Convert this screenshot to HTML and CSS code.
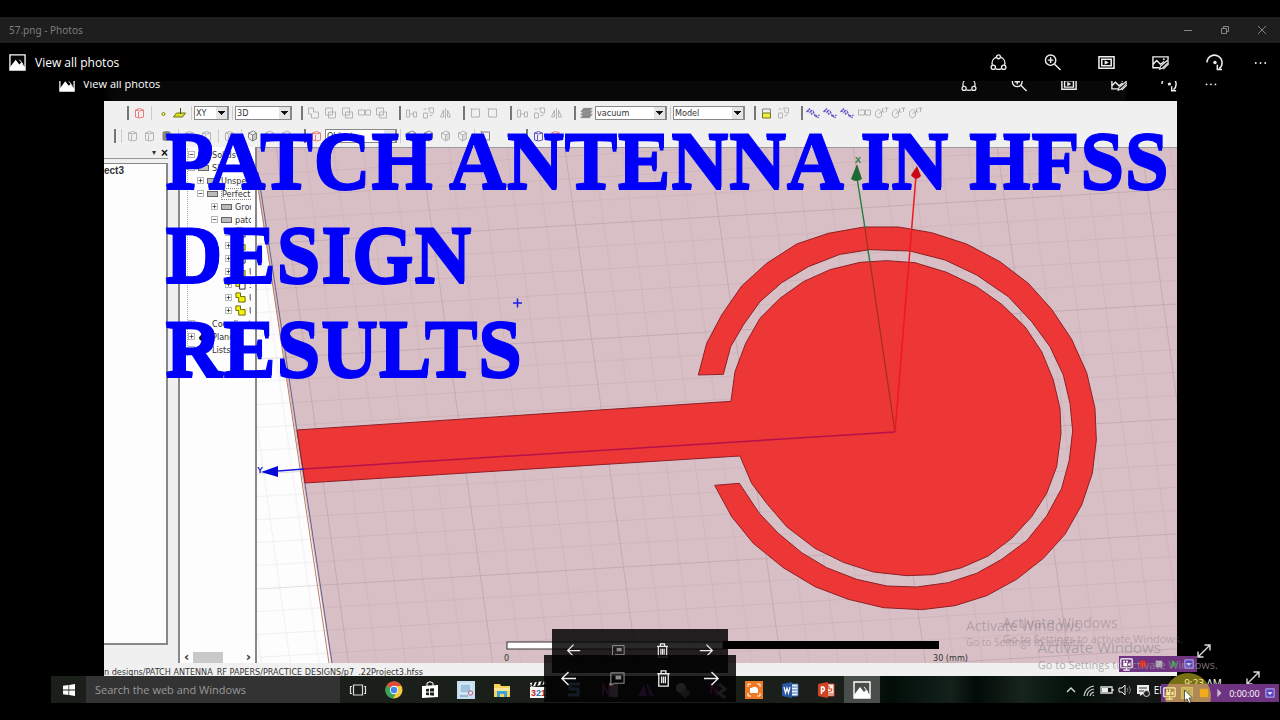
FILE: index.html
```html
<!DOCTYPE html>
<html lang="en">
<head>
<meta charset="utf-8">
<title>57.png - Photos</title>
<link rel="stylesheet" href="styles.css">
</head>
<body>
<svg class="defs" aria-hidden="true">
  <symbol id="picture" viewBox="0 0 18 18"><path d="M1 1h16v16H1z" fill="none" stroke="currentColor" stroke-width="1.4"/><path d="M1 14l6-8 4 5 2-2 4 5v3H1z" fill="currentColor"/><path d="M11 6l4 5" stroke="currentColor"/></symbol>
  <symbol id="share" viewBox="0 0 18 18"><g fill="none" stroke="currentColor" stroke-width="1.4"><path d="M6.600 3.200A7 7 0 0 0 2.500 11.500M11.400 3.200a7 7 0 0 1 4.100 8.300M6 15.700q3 1 6 0"/><circle cx="9" cy="3" r="2"/><circle cx="3.500" cy="14" r="2.300"/><circle cx="14.500" cy="14" r="2.300"/></g></symbol>
  <symbol id="magnify" viewBox="0 0 18 18"><g fill="none" stroke="currentColor" stroke-width="1.500"><circle cx="7" cy="6.500" r="5.500"/><path d="M11 10.500l6.500 6.500M4 6.500h6M7 3.500v6"/></g></symbol>
  <symbol id="slides" viewBox="0 0 18 18"><path d="M1 3h16v12H1zM4 5.500h10v7H4z" fill="none" stroke="currentColor" stroke-width="1.600"/><path d="M7 6.500v5L11.500 9z" fill="currentColor"/></symbol>
  <symbol id="edit" viewBox="0 0 18 18"><path d="M8 14.500H1V3h16v4M1 11l4-4 4 4 4-3" fill="none" stroke="currentColor" stroke-width="1.500"/><path d="M8 16l1-3 7-6 1.500 1.500L11 15zM12 16l6-6" fill="none" stroke="currentColor" stroke-width="1.200"/><circle cx="12.500" cy="5.500" r="1" fill="currentColor"/></symbol>
  <symbol id="rotate" viewBox="0 0 18 18"><path d="M1 9a8 8 0 1 1 13 6.500M12 11.500v5h5" fill="none" stroke="currentColor" stroke-width="1.600"/><circle cx="9.500" cy="9" r="1.800" fill="currentColor"/></symbol>
  <symbol id="more" viewBox="0 0 18 18"><g fill="currentColor"><circle cx="4" cy="9.500" r="1"/><circle cx="9" cy="9.500" r="1"/><circle cx="14" cy="9.500" r="1"/></g></symbol>
  <symbol id="back" viewBox="0 0 18 18"><path d="M17 9H2M9 2L2 9l7 7" fill="none" stroke="currentColor" stroke-width="1.500"/></symbol>
  <symbol id="next" viewBox="0 0 18 18"><path d="M1 9h15M9 2l7 7-7 7" fill="none" stroke="currentColor" stroke-width="1.500"/></symbol>
  <symbol id="album" viewBox="0 0 18 18"><path d="M3 3h14v11H6M3 3v12M1 15h5M3 12v5" fill="none" stroke="currentColor" stroke-width="1.200"/><path d="M8 6h6v4H8z" fill="currentColor"/></symbol>
  <symbol id="bin" viewBox="0 0 18 18"><path d="M2.500 4h13M6.500 3.500V1h5v2.500M4 4.500v12.500h10V4.500M7 7v7M9 7v7M11 7v7" fill="none" stroke="currentColor" stroke-width="1.400"/></symbol>
  <symbol id="expand" viewBox="0 0 16 16"><path d="M2 14L14 2M8.500 2H14v5.500M2 8.500V14h5.500" fill="none" stroke="currentColor" stroke-width="1.400"/></symbol>
  <symbol id="cyl" viewBox="0 0 12 12"><path d="M2 3q4-3 8 0v7q-4 2-8 0zM2 3q4 2 8 0M5 5v6" fill="none" stroke="currentColor"/></symbol>
  <symbol id="cylfull" viewBox="0 0 12 12"><path d="M2 2q4-2 8 0v8q-4 2-8 0z" fill="currentColor"/></symbol>
  <symbol id="cube" viewBox="0 0 12 12"><path d="M2 3l5-2 3 2v6l-4 2-4-3zM2 3l4 2 4-2M6 5v6" fill="none" stroke="currentColor"/><path d="M6 5l4-2v6l-4 2z" fill="currentColor" opacity=".4"/></symbol>
  <symbol id="unite" viewBox="0 0 12 12"><path d="M1 1h5v4h5v6H4V7H1z" fill="none" stroke="currentColor"/></symbol>
  <symbol id="subtract" viewBox="0 0 12 12"><path d="M1 1h7v7H1zM4 5h7v6H4z" fill="none" stroke="currentColor"/></symbol>
  <symbol id="split" viewBox="0 0 12 12"><path d="M0 3h6v5H0zM7 3h5v5H7z" fill="none" stroke="currentColor"/></symbol>
  <symbol id="move" viewBox="0 0 12 12"><path d="M1 3h3v7H1zM8 5h3v5H8zM4 7h4" fill="none" stroke="currentColor"/></symbol>
  <symbol id="turn" viewBox="0 0 12 12"><path d="M1 6h4v5H1zM6 1h5v5H8zM7 9l3-1M1 2h3" fill="none" stroke="currentColor"/></symbol>
  <symbol id="mirror" viewBox="0 0 12 12"><path d="M1 10l3-7v7zM6 1v11M8 3v7h3z" fill="none" stroke="currentColor"/></symbol>
  <symbol id="box" viewBox="0 0 12 12"><path d="M2 2h8v8H2zM1 1l2 2" fill="none" stroke="currentColor"/></symbol>
  <symbol id="stack" viewBox="0 0 12 12"><path d="M3 1h9l-3 4H0zM3 4h9l-3 4H0zM3 7h9l-3 4H0z" fill="currentColor" stroke="#aaa" stroke-width=".4"/></symbol>
  <symbol id="tile" viewBox="0 0 12 12"><path d="M2 6h8v5H2z" fill="#eeee4a" stroke="#6c7410"/><path d="M2 6V2h8v4" fill="none" stroke="#7d8a72"/></symbol>
  <symbol id="wave" viewBox="0 0 14 12"><path d="M0 5l3-3 2 5 2-2 2 5 4-2M1 3l2 3M9 8l3 3M4 4l3-1" fill="none" stroke="currentColor" stroke-width="1.400" stroke-dasharray="2 1"/></symbol>
  <symbol id="measure" viewBox="0 0 14 12"><path d="M1 5l3-3 3 3v4l-3 2-3-2zM4 7l5-4M8 1v4h2M12 1v4M10 1h4" fill="none" stroke="currentColor"/></symbol>
  <symbol id="part" viewBox="0 0 12 12"><path d="M1 1h5v4h5v6H4V6H1z" fill="#f4f400" stroke="#605f00"/></symbol>
  <symbol id="cut" viewBox="0 0 12 12"><path d="M1 1h7v7H1z" fill="#f4f400" stroke="#605f00"/><path d="M5 5h6v6H5z" fill="#fff" stroke="#222"/></symbol>
  <symbol id="cam" viewBox="0 0 16 16"><path d="M2 1h12a1 1 0 0 1 1 1v9a1 1 0 0 1-1 1H2a1 1 0 0 1-1-1V2a1 1 0 0 1 1-1zM4 15h8M8 12v3" fill="none" stroke="currentColor" stroke-width="1.500"/><path d="M4 6h5v4H4zM10 7l3-2v5l-3-1z" fill="currentColor"/><circle cx="5" cy="4.500" r="1.300" fill="currentColor"/><circle cx="8.500" cy="4.500" r="1.300" fill="currentColor"/></symbol>
  <symbol id="plus" viewBox="0 0 9 9"><path d="M.5.5h8v8h-8z" fill="#fff" stroke="#999"/><path d="M2 4.500h5M4.500 2v5" stroke="#333"/></symbol>
  <symbol id="minus" viewBox="0 0 9 9"><path d="M.5.5h8v8h-8z" fill="#fff" stroke="#999"/><path d="M2 4.500h5" stroke="#333"/></symbol>
</svg>

<div class="page">
  <header class="titlebar">
    <span>57.png - Photos</span>
    <div class="winbtns">
      <button aria-label="Minimise"><svg viewBox="0 0 10 10"><path d="M1 5.500h8"/></svg></button>
      <button aria-label="Restore"><svg viewBox="0 0 10 10"><path d="M1.500 3.500h5v5h-5zM3.500 3V1.500h5v5H7"/></svg></button>
      <button aria-label="Close"><svg viewBox="0 0 10 10"><path d="M1 1l8 8M9 1L1 9"/></svg></button>
    </div>
  </header>

  <nav class="photobar">
    <a href="#" class="allphotos"><svg><use href="#picture"/></svg>View all photos</a>
    <div class="tools">
      <button aria-label="Share"><svg><use href="#share"/></svg></button>
      <button aria-label="Zoom"><svg><use href="#magnify"/></svg></button>
      <button aria-label="Slideshow"><svg><use href="#slides"/></svg></button>
      <button aria-label="Edit"><svg><use href="#edit"/></svg></button>
      <button aria-label="Rotate"><svg><use href="#rotate"/></svg></button>
      <button class="last" aria-label="More"><svg><use href="#more"/></svg></button>
    </div>
  </nav>

  <nav class="photobar inner">
    <a href="#" class="allphotos"><svg><use href="#picture"/></svg>View all photos</a>
    <div class="tools">
      <button aria-label="Share"><svg><use href="#share"/></svg></button>
      <button aria-label="Zoom"><svg><use href="#magnify"/></svg></button>
      <button aria-label="Slideshow"><svg><use href="#slides"/></svg></button>
      <button aria-label="Edit"><svg><use href="#edit"/></svg></button>
      <button aria-label="Rotate"><svg><use href="#rotate"/></svg></button>
      <button class="last" aria-label="More"><svg><use href="#more"/></svg></button>
    </div>
  </nav>

  <main class="app">
    <div class="bar bar1">
      <i class="grip"></i><svg class="red"><use href="#cyl"/></svg><i class="sep"></i>
      <svg viewBox="0 0 12 12"><circle cx="7" cy="7" r="1.500" fill="#f6f66a" stroke="#7d8610"/></svg>
      <svg viewBox="0 0 12 12"><path d="M3 6h9l-3 4H0z" fill="#d7df2a" stroke="#6a7410"/><path d="M7 1v6" stroke="#49520a"/></svg><i class="sep"></i>
      <label class="sel s1"><select aria-label="Plane"><option>XY</option></select></label><i class="sep"></i>
      <label class="sel s2"><select aria-label="Mode"><option>3D</option></select></label>
      <i class="grip"></i><svg><use href="#unite"/></svg><svg><use href="#subtract"/></svg><svg><use href="#subtract"/></svg><svg><use href="#split"/></svg><svg><use href="#subtract"/></svg>
      <i class="grip"></i><svg><use href="#move"/></svg><svg><use href="#turn"/></svg><svg><use href="#mirror"/></svg>
      <i class="grip"></i><svg><use href="#box"/></svg><svg><use href="#box"/></svg>
      <i class="grip"></i><svg><use href="#move"/></svg><svg><use href="#turn"/></svg><svg><use href="#mirror"/></svg>
      <i class="grip"></i><svg class="dark"><use href="#stack"/></svg>
      <label class="sel s3"><select aria-label="Material"><option>vacuum</option></select></label><i class="sep"></i>
      <label class="sel s3"><select aria-label="Model type"><option>Model</option></select></label>
      <i class="grip"></i><svg><use href="#tile"/></svg><svg><use href="#turn"/></svg>
      <i class="grip"></i><svg class="blue"><use href="#wave"/></svg><svg class="blue"><use href="#wave"/></svg><svg class="blue"><use href="#wave"/></svg><svg><use href="#split"/></svg><svg><use href="#measure"/></svg><svg><use href="#measure"/></svg><svg><use href="#measure"/></svg>
    </div>
    <div class="bar bar2">
      <i class="grip"></i><i class="sep"></i><svg><use href="#cyl"/></svg><svg><use href="#cyl"/></svg><svg class="dark"><use href="#cylfull"/></svg><i class="sep"></i><svg><use href="#cyl"/></svg><svg><use href="#cyl"/></svg><i class="sep"></i><svg><use href="#cyl"/></svg><i class="sep"></i><svg class="dark"><use href="#cube"/></svg><svg><use href="#cube"/></svg><svg><use href="#cube"/></svg>
      <i class="grip"></i><svg class="red"><use href="#cyl"/></svg>
      <label class="sel s3"><select aria-label="Selection"><option>Object</option></select></label><i class="sep"></i>
      <svg class="dark"><use href="#cube"/></svg><svg class="dark"><use href="#cube"/></svg><svg><use href="#cube"/></svg><svg><use href="#cube"/></svg><i class="sep"></i><svg class="dark"><use href="#box"/></svg>
      <i class="grip wide"></i><svg class="blue"><use href="#cyl"/></svg><svg class="red"><use href="#cyl"/></svg>
    </div>

    <div class="work">
      <section class="project">
        <header><span>▾</span><button aria-label="Close panel">×</button></header>
        <div class="list"><b>ect3</b></div>
      </section>
      <section class="tree">
        <ul>
          <li><svg class="pm"><use href="#minus"/></svg><i class="chip"></i>Solids</li>
          <li><svg class="pm"><use href="#minus"/></svg><i class="chip"></i>Sheets</li>
          <li class="l1"><svg class="pm"><use href="#plus"/></svg><i class="chip"></i>Unspecified</li>
          <li class="l1"><svg class="pm"><use href="#minus"/></svg><i class="chip"></i><span class="focus">Perfect E</span></li>
          <li class="l2"><svg class="pm"><use href="#plus"/></svg><i class="chip"></i>Ground</li>
          <li class="l2"><svg class="pm"><use href="#minus"/></svg><i class="chip"></i>patch</li>
          <li class="l3"><svg class="pm"><use href="#plus"/></svg><svg><use href="#cut"/></svg></li>
          <li class="l3"><svg class="pm"><use href="#plus"/></svg><svg><use href="#part"/></svg></li>
          <li class="l3"><svg class="pm"><use href="#plus"/></svg><svg><use href="#cut"/></svg></li>
          <li class="l3"><svg class="pm"><use href="#plus"/></svg><svg><use href="#part"/></svg>U</li>
          <li class="l3"><svg class="pm"><use href="#plus"/></svg><svg><use href="#cut"/></svg>S</li>
          <li class="l3"><svg class="pm"><use href="#plus"/></svg><svg><use href="#part"/></svg>U</li>
          <li class="l3"><svg class="pm"><use href="#plus"/></svg><svg><use href="#part"/></svg>U</li>
          <li><svg class="pm"><use href="#plus"/></svg><i class="gap"></i>Coordinate</li>
          <li><svg class="pm"><use href="#plus"/></svg><svg viewBox="0 0 12 12"><path d="M1 7l5-6 5 2-3 8-6-1z" fill="#111"/></svg>Planes</li>
          <li><svg class="pm"><use href="#plus"/></svg><i class="gap"></i>Lists</li>
        </ul>
        <div class="hscroll"><span>‹</span><i></i><span>›</span></div>
      </section>
      <svg class="model" viewBox="257 148 920 515" preserveAspectRatio="xMinYMin slice" role="img" aria-label="Patch antenna model">
        <defs>
          <pattern id="grid" width="143" height="114" patternUnits="userSpaceOnUse" patternTransform="matrix(1 -.06 .14 1 718 216)">
            <path d="M28.600 0v114M57.200 0v114M85.800 0v114M114.400 0v114M0 22.800h143M0 45.600h143M0 68.400h143M0 91.200h143" stroke="#503040" stroke-opacity=".07" fill="none"/>
            <path d="M.5 0v114M0 .5h143" stroke="#503040" stroke-opacity=".15" fill="none"/>
          </pattern>
        </defs>
        <path d="M257 148h920v515H257z" fill="#fdfdfd"/>
        <path d="M257 148h920v515H331L257 185z" fill="#d8bfc5"/>
        <path d="M257 148h920v515H257z" fill="url(#grid)"/>
        <path d="M257 180L329 663" stroke="#bd7d62" fill="none"/>
        <path d="M258 172L332 663" stroke="#66618e" fill="none"/>
        <g transform="translate(680 200) scale(.33333)" fill="#ed3636" stroke="#8c2026" stroke-width="3">
          <path d="M55 525L80 430 125 345 185 258 260 190 350 132 445 100 552 81 655 81 755 98 860 132 960 185 1045 250 1115 328 1175 418 1220 518 1245 625 1249 720 1237 820 1205 915 1155 1003 1090 1075 1010 1138 920 1187 825 1217 725 1229 610 1223 505 1198 405 1160 310 1103 220 1030 155 950 104 856 178 850 238 940 295 1000 365 1058 440 1103 530 1138 620 1158 710 1161 805 1148 890 1120 965 1078 1040 1022 1100 948 1145 865 1168 780 1178 692 1170 610 1150 525 1110 440 1055 365 985 290 890 225 795 180 690 153 570 149 480 163 385 200 305 248 240 305 190 375 152 440 130 523z"/>
          <path d="M153 604L165 515 197 430 240 355 300 295 370 245 450 209 540 187 620 182 705 188 800 217 890 260 965 313 1035 380 1085 455 1120 540 1140 625 1143 700 1130 800 1100 880 1055 950 995 1015 925 1068 845 1103 760 1124 680 1127 580 1116 490 1087 405 1045 320 980 260 910 215 850 180 768-1125 849-1149 690z"/>
        </g>
        <path d="M857 178l8 50M868 250l2 12" stroke="#26803f" stroke-width="1.400"/>
        <path d="M865 228l3 22M870 262l25 170" stroke="#a0301c" stroke-width="1.200"/>
        <path d="M895 432l21-256" stroke="#f01820" stroke-width="1.500"/>
        <path d="M895 432L304 469" stroke="#b8104c" stroke-width="1.500"/>
        <path d="M304 469l-26 2" stroke="#1818d8" stroke-width="1.400"/>
        <path d="M261 472l17-6v11z" fill="#0808d8"/>
        <path d="M857 164l-6 15q5 4 11 0z" fill="#1d6b34"/>
        <path d="M917 166l-6 9q5 7 10 1z" fill="#c80814"/>
        <text x="855" y="163" class="axis green">X</text>
        <text x="257" y="473" class="axis blu">Y</text>
        <path d="M513 303h9M517.500 298.500v9" stroke="#1c1cf0" stroke-width="1.500"/>
        <rect x="507" y="642" width="216" height="7" fill="#fff" stroke="#333"/>
        <rect x="723" y="641" width="216" height="8" fill="#000"/>
        <text x="504" y="661" class="scale">0</text>
        <text x="933" y="661" class="scale">30 (mm)</text>
      </svg>
    </div>
    <footer class="status">n designs/PATCH ANTENNA_RF PAPERS/PRACTICE DESIGNS/p7_.22Project3.hfss</footer>
    <h1 class="headline">PATCH ANTENNA IN HFSS<br>DESIGN<br>RESULTS</h1>
  </main>

  <div class="taskbar">
    <button aria-label="Start" class="start"><svg viewBox="0 0 12 12"><path d="M0 1.700L5.500 1v4.600H0zM6.200.9L12 0v5.600H6.200zM0 6.400h5.500V11L0 10.300zM6.200 6.400H12V12l-5.800-.9z" fill="#fff"/></svg></button>
    <input type="text" aria-label="Search" placeholder="Search the web and Windows">
    <button aria-label="Task view"><svg viewBox="0 0 18 18"><path d="M4.500 4h9v10h-9zM3 5.500H1.500v7H3M15 5.500h1.500v7H15" fill="none" stroke="#ddd" stroke-width="1.200"/></svg></button>
    <button aria-label="Chrome"><svg viewBox="0 0 18 18"><circle cx="9" cy="9" r="8.500" fill="#f7cc3a"/><path d="M9 9L1.600 4.800A8.500 8.500 0 0 1 16.400 5H9z" fill="#dd4b3e"/><path d="M9 9L1.600 4.800A8.500 8.500 0 0 0 8 17.500L12 11z" fill="#37a35a"/><circle cx="9" cy="9" r="4.200" fill="#fff"/><circle cx="9" cy="9" r="3.300" fill="#4386ed"/></svg></button>
    <button aria-label="Store"><svg viewBox="0 0 18 18"><path d="M1 5l16-1v12L1 17z" fill="#fff"/><path d="M6 5V2q3-2.500 6 0v3" stroke="#fff" fill="none"/><path d="M5 8l3-.3v2.800H5zM9 7.600l4-.4v3.300H9zM5 11.500h3v2.700l-3-.2zM9 11.500h4v3.200l-4-.4z" fill="#182018"/></svg></button>
    <button aria-label="Snipping tool"><svg viewBox="0 0 18 18"><path d="M0 0h18v18H0z" fill="#c5dff0"/><path d="M3 3h11v9H3z" fill="#9cc3df" stroke="#e9f5fc"/><path d="M3 15h8" stroke="#688ca6"/><circle cx="13.500" cy="12" r="2.200" fill="none" stroke="#d0607a"/></svg></button>
    <button aria-label="File Explorer"><svg viewBox="0 0 18 18"><path d="M1 3h6l1 2h9v11H1z" fill="#f8d35c"/><path d="M1 7h16v3H1z" fill="#fae69a"/><path d="M4 16v-6h10v6h-3v-3H7v3z" fill="#3ba2dc"/></svg></button>
    <button aria-label="Video editor"><svg viewBox="0 0 18 18"><path d="M1 6h16v11H1z" fill="#f5f5f5"/><path d="M1 2l15-2 1 3-15 3z" fill="#fff"/><path d="M3 5l2-4M7 5l2-4M12 4l2-4" stroke="#111" stroke-width="2"/><text x="2" y="15" class="t321"><tspan fill="#c22">3</tspan><tspan fill="#27b">2</tspan><tspan fill="#c22">1</tspan></text></svg></button>
    <button aria-label="App S"><svg viewBox="0 0 18 18"><path d="M15 3H5v5h8v6H3" fill="none" stroke="#7aa6ea" stroke-width="3"/></svg></button>
    <button aria-label="OneNote"><svg viewBox="0 0 18 18"><path d="M9 2h8v14H9z" fill="#b79ab2"/><path d="M2 14V4l6 10V4" fill="none" stroke="#c83aa6" stroke-width="2"/></svg></button>
    <button aria-label="App M"><svg viewBox="0 0 18 18"><path d="M1 15l6-12 3 12zM9 3l4 12h4L11 3z" fill="#9a42c8"/></svg></button>
    <button aria-label="Contacts"><svg viewBox="0 0 18 18"><circle cx="8" cy="7" r="5" fill="#bbb"/><path d="M7 13l8-5 2 5-5 4z" fill="#888"/></svg></button>
    <button aria-label="App N"><svg viewBox="0 0 18 18"><path d="M2 13V3l6 10V3" fill="none" stroke="#b43296" stroke-width="2"/><path d="M10 3l6 5-6 4 6 5" fill="none" stroke="#aaa" stroke-width="3"/></svg></button>
    <button aria-label="Screen recorder"><svg viewBox="0 0 18 18"><path d="M0 0h18v18H0z" fill="#ec7a27"/><path d="M3 6V3h3M12 3h3v3M15 12v3h-3M6 15H3v-3" fill="none" stroke="#fff"/><path d="M5 7h2l1-1h3l2 2v4H5z" fill="#fff"/></svg></button>
    <button aria-label="Word"><svg viewBox="0 0 18 18"><path d="M8 3h9v12H8z" fill="#eef4fb" stroke="#3968b0"/><path d="M10 6h6M10 9h6M10 12h6" stroke="#3968b0"/><path d="M1 3l10-2v16L1 15z" fill="#2a57a4"/><path d="M3 6l1.500 6L6 7l1.500 5L9 6" fill="none" stroke="#fff" stroke-width="1.200"/></svg></button>
    <button aria-label="PowerPoint"><svg viewBox="0 0 18 18"><path d="M8 3h9v12H8z" fill="#fbeeea" stroke="#cf4525"/><path d="M12 5a3 3 0 1 0 3 3h-3zM11 13h5" stroke="#cf4525" fill="none"/><path d="M1 3l10-2v16L1 15z" fill="#d04423"/><path d="M4.500 13V6h2q2 2 0 4h-2" fill="none" stroke="#fff" stroke-width="1.500"/></svg></button>
    <button aria-label="Photos" class="active"><svg><use href="#picture"/></svg></button>
    <div class="tray">
      <svg viewBox="0 0 14 14"><path d="M3 9l4-4 4 4" fill="none" stroke="#ddd" stroke-width="1.300"/></svg>
      <svg viewBox="0 0 14 14"><path d="M2 13A11 11 0 0 1 12 3M5 13a8 8 0 0 1 7-7M8 13a5 5 0 0 1 4-4M11 13a3 3 0 0 1 1-1" fill="none" stroke="#ccc" stroke-width="1.200"/></svg>
      <svg viewBox="0 0 14 14"><path d="M1 4h11v6H1zM13 6v2" fill="none" stroke="#ddd" stroke-width="1.300"/><path d="M2 5h6v4H2z" fill="#eee"/></svg>
      <svg viewBox="0 0 14 14"><path d="M1 5h3l3-3v10L4 9H1z" fill="none" stroke="#eee"/><path d="M9 5q2 2 0 4M11 3q3 4 0 8" fill="none" stroke="#777"/></svg>
      <svg viewBox="0 0 14 14"><path d="M1 2h12v9H7l-3 2v-2H1z" fill="#eee"/><path d="M3 5h8M3 8h5" stroke="#333"/><circle cx="10.500" cy="10.500" r="3" fill="#222" stroke="#ddd"/></svg>
      <span>ENG</span>
      <time>9:23 AM</time>
    </div>
  </div>
</div>

<div class="mark m1"><b>Activate Windows</b><span>Go to Settings to activate</span></div>
<div class="mark m2"><b>Activate Windows</b><span>Go to Settings to activate Windows.</span></div>

<div class="viewnav v1">
  <button aria-label="Previous"><svg><use href="#back"/></svg></button>
  <button aria-label="Album" class="dim"><svg><use href="#album"/></svg></button>
  <button aria-label="Delete"><svg><use href="#bin"/></svg></button>
  <button aria-label="Next"><svg><use href="#next"/></svg></button>
</div>
<div class="viewnav v2">
  <button aria-label="Previous"><svg><use href="#back"/></svg></button>
  <button aria-label="Album" class="dim"><svg><use href="#album"/></svg></button>
  <button aria-label="Delete"><svg><use href="#bin"/></svg></button>
  <button aria-label="Next"><svg><use href="#next"/></svg></button>
</div>

<div class="rec r1">
  <svg><use href="#cam"/></svg>
  <svg viewBox="0 0 12 12"><circle cx="6" cy="6" r="4.500" fill="#e0281e"/></svg>
  <svg viewBox="0 0 12 12"><path d="M2 2h8v8H2z" fill="#b5aebb"/></svg>
  <svg viewBox="0 0 12 12"><path d="M3 1l7 5-7 5z" fill="#22a03a"/></svg>
  <svg viewBox="0 0 12 12"><path d="M1 1h10v10H1z" fill="#5b46c8" stroke="#c9c0f4"/><path d="M3 5h6L6 8z" fill="#fff"/></svg>
</div>
<div class="mark m3"><b>Activate Windows</b><span>Go to Settings to activate Windows.</span></div>
<button class="resize e1" aria-label="Resize inner"><svg><use href="#expand"/></svg></button>
<button class="resize e2" aria-label="Resize"><svg><use href="#expand"/></svg></button>
<div class="rec r2">
  <svg><use href="#cam"/></svg>
  <svg viewBox="0 0 12 12"><path d="M0 0h12v12H0z" fill="#a08a88" stroke="#d0bcae"/><path d="M4 3v6M8 3v6" stroke="#777" stroke-width="2"/></svg>
  <svg viewBox="0 0 12 12"><path d="M1 1h10v10H1z" fill="#f47a10"/></svg>
  <svg viewBox="0 0 12 12"><path d="M4 1l5 5-5 5z" fill="#c9b8cf"/></svg>
  <span>0:00:00</span>
  <svg viewBox="0 0 12 12"><path d="M1 1h10v10H1z" fill="#5b46c8" stroke="#c9c0f4"/><path d="M3 5h6L6 8z" fill="#fff"/></svg>
</div>
<div class="halo"><i></i></div>
<svg class="pointer" viewBox="0 0 10 15"><path d="M1 1v11l2.500-2.300L5.500 14l2-1-2-4H9z" fill="#fff" stroke="#222" stroke-width=".7"/></svg>
</body>
</html>
```
FILE: styles.css
```css
* { box-sizing: border-box; }
body {
  margin: 0;
  position: relative;
  min-height: 100vh;
  overflow: hidden;
  background: #000;
  color: #fff;
  font-family: "Open Sans", "Noto Sans", sans-serif;
}
button { background: none; border: 0; padding: 0; color: inherit; display: flex; align-items: center; justify-content: center; }
.defs { position: absolute; width: 0; height: 0; }
.page { min-height: 100vh; padding: 17px 0 18px; display: flex; flex-direction: column; }

.titlebar {
  height: 26px;
  display: flex;
  align-items: center;
  justify-content: space-between;
  padding: 0 0 0 9px;
  background: #1e1e1e;
  color: #7d7d7d;
  font: 10px "Noto Sans", sans-serif;
}
.winbtns { display: flex; }
.winbtns button { width: 37px; height: 26px; }
.winbtns svg { width: 10px; height: 10px; fill: none; stroke: #858585; }

.photobar {
  height: 38px;
  flex: none;
  display: flex;
  align-items: center;
  justify-content: space-between;
  padding: 0 11px 0 9px;
}
.photobar svg { width: 17px; height: 17px; }
.allphotos { display: flex; align-items: center; gap: 9px; color: #fff; font-size: 12px; text-decoration: none; }
.tools { display: flex; gap: 37px; color: #eee; }
.tools .last { margin-left: -8px; }
.photobar.inner {
  height: 20px;
  align-items: flex-end;
  overflow: hidden;
  padding: 0 61px 9px 59px;
  background: linear-gradient(90deg, #000 8%, #080808 9%, #080808 88%, #000 88%);
}
.inner .allphotos { font-size: 11px; gap: 8px; height: 17px; }
.inner .tools { gap: 34px; }
.inner svg { width: 16px; height: 16px; }
.inner .tools .last { margin-left: -8px; }

.app {
  position: relative;
  flex: 1;
  min-height: 0;
  margin: 0 103px 0 104px;
  display: flex;
  flex-direction: column;
  background: #f0f0f0;
  color: #333;
  font-family: "Liberation Sans", Arial, sans-serif;
  font-size: 10px;
}
.bar { flex: none; display: flex; align-items: center; color: #b4b4b4; overflow: hidden; }
.bar1 { height: 24px; padding-left: 14px; }
.bar2 { height: 22px; padding-left: 1px; }
.bar svg { flex: none; width: 17px; height: 12px; }
.bar .red { color: #ea7a7a; }
.bar .blue { color: #5c56c4; }
.bar .dark { color: #858585; }
.grip { flex: none; width: 11px; height: 14px; border-right: 2px solid #777; margin-right: 2px; }
.grip.wide { width: 34px; }
.sep { flex: none; width: 4px; height: 14px; border-right: 1px solid #ccc; margin-right: 2px; }
.sel { flex: none; position: relative; display: block; height: 14px; }
.sel select {
  appearance: none;
  display: block;
  width: 100%;
  height: 14px;
  padding: 0 12px 0 1px;
  border: 1px solid #888;
  border-radius: 0;
  background: #fff;
  color: #333;
  font: 9px "DejaVu Sans Condensed", "DejaVu Sans", sans-serif;
}
.sel::after {
  content: "";
  position: absolute;
  right: 1px;
  top: 1px;
  width: 11px;
  height: 12px;
  background: linear-gradient(#111, #111) 2px 4px / 7px 1px no-repeat, linear-gradient(#111, #111) 3px 5px / 5px 1px no-repeat, linear-gradient(#111, #111) 4px 6px / 3px 1px no-repeat, linear-gradient(#111, #111) 5px 7px / 1px 1px no-repeat, #e4e4e4;
  border-right: 1px solid #888;
  border-bottom: 1px solid #888;
}
.s1 { width: 35px; }
.s2 { width: 57px; }
.s3 { width: 72px; }

.work { flex: 1; min-height: 0; display: flex; }
.project { flex: none; width: 64px; margin-right: 10px; display: flex; flex-direction: column; padding-bottom: 18px; }
.project header { height: 12px; flex: none; display: flex; justify-content: flex-end; align-items: center; gap: 5px; border-bottom: 1px solid #999; font-size: 8px; }
.project header button { font: bold 12px "Liberation Sans", sans-serif; color: #111; }
.project .list { flex: 1; margin-top: 4px; padding: 1px 0; background: #fdfdfd; border: solid #888; border-width: 1px 2px 2px 0; font-size: 10px; }
.tree { flex: none; width: 79px; display: flex; flex-direction: column; justify-content: space-between; border: solid #888; border-width: 0 2px; background: #fdfdfd; padding: 1px 4px 0; overflow: hidden; }
.tree ul { list-style: none; margin: 0 0 0 3px; padding: 0; overflow: hidden; border-left: 1px dotted #aaa; }
.tree li { display: flex; align-items: center; height: 13px; gap: 3px; white-space: nowrap; font: 9px "DejaVu Sans Condensed", "DejaVu Sans", sans-serif; }
.tree .l1 { padding-left: 9px; }
.tree .l2 { padding-left: 23px; }
.tree .l3 { padding-left: 37px; }
.chip { flex: none; width: 11px; height: 6px; border: 1px solid #666; background: #bbb; }
.gap { flex: none; width: 11px; }
.tree svg { flex: none; width: 11px; height: 11px; }
.tree .pm { width: 7px; height: 7px; }
.focus { border: 1px dotted #888; }
.hscroll { height: 12px; display: flex; justify-content: space-between; align-items: center; font: bold 13px/10px "DejaVu Sans", sans-serif; }
.hscroll i { width: 30px; height: 11px; margin-right: 20px; background: #c9c9c9; }
.model { flex: 1; min-width: 0; width: 100%; height: 100%; border-top: 1px solid #999; }
.axis { font: bold 9px "Liberation Sans", sans-serif; }
.green { fill: #267a3b; }
.blu { fill: #1414c8; }
.scale { font: 9px "DejaVu Sans Condensed", "DejaVu Sans", sans-serif; fill: #333; }
.status { flex: none; height: 13px; overflow: hidden; white-space: nowrap; font: 9px/18px "DejaVu Sans Condensed", "DejaVu Sans", sans-serif; color: #333; }
.headline {
  position: absolute;
  left: 61px;
  top: 12px;
  margin: 0;
  color: #0000fa;
  font: bold 80px/94px "Liberation Serif", "Times New Roman", serif;
  white-space: nowrap;
  -webkit-text-stroke: 1px #0000fa;
  text-shadow: 0 3px 0 #0000fa, 0 2px 0 #a9a0f0;
}

.taskbar {
  flex: none;
  height: 27px;
  margin: 0 0 0 51px;
  padding-right: 52px;
  display: flex;
  align-items: stretch;
  background: linear-gradient(90deg, #1a1f1a 0 794px, #020d08 840px, #14211b 900px, #020b07 925px, #17231d 970px, #04100a 1020px, #171a18 1090px, #111 1120px, #000 1120px);
}
.taskbar button { width: 36px; }
.taskbar .start { width: 35px; }
.taskbar .active { background: #4a4e4b; }
.taskbar svg { width: 18px; height: 18px; }
.taskbar .start svg { width: 12px; height: 12px; }
.taskbar input { width: 254px; border: 0; padding: 0 9px; background: #333; color: #999; font: 11px "Open Sans", "Noto Sans", sans-serif; }
.taskbar input::placeholder { color: #999; opacity: 1; }
.t321 { font: bold 9px "Liberation Sans", sans-serif; }
.tray { margin-left: auto; display: flex; align-items: center; gap: 4px; font-size: 10px; }
.tray svg { width: 14px; height: 14px; }
.tray time { align-self: flex-start; height: 14px; width: 50px; text-align: center; white-space: nowrap; }

.viewnav {
  position: absolute;
  left: 50%;
  transform: translateX(-50%);
  display: flex;
  align-items: center;
  justify-content: space-between;
  background: rgba(0, 0, 0, .84);
  color: #eee;
}
.viewnav svg { width: 17px; height: 17px; }
.viewnav .dim { color: #888; }
.v1 { bottom: 48px; width: 176px; height: 44px; padding: 0 14px 2px; }
.v1 svg { width: 15px; height: 15px; }
.v2 { bottom: 19px; width: 192px; height: 47px; padding: 0 16px; }

.mark { position: absolute; display: flex; flex-direction: column; white-space: nowrap; color: rgba(125, 115, 122, .42); line-height: 16px; }
.mark b { font-weight: 400; }
.m1 { right: 198px; bottom: 71px; font-size: 10px; }
.m1 b { font-size: 14px; }
.m2 { right: 97px; bottom: 74px; font-size: 11px; }
.m2 b { font-size: 14px; }
.m3 { right: 62px; bottom: 47px; font-size: 11px; line-height: 18px; color: rgba(155, 148, 155, .75); }
.m3 b { font-size: 15px; }

.rec { position: absolute; display: flex; align-items: center; justify-content: space-between; background: #6e3482; color: #fff; font-size: 10px; }
.rec svg { width: 10px; height: 10px; }
.rec svg:first-child { width: 13px; height: 13px; }
.r1 { right: 83px; bottom: 49px; width: 78px; height: 16px; padding: 0 3px 0 1px; }
.r2 { right: 1px; bottom: 19px; width: 118px; height: 18px; padding: 0 4px 0 2px; }
.r2 span { font-size: 9px; }
.r2 svg:nth-child(2) { width: 12px; height: 12px; }
.resize { position: absolute; color: #ddd; }
.resize svg { width: 16px; height: 16px; }
.e1 { right: 68px; bottom: 62px; }
.e2 { right: 19px; bottom: 35px; }
.halo { position: absolute; right: 69px; bottom: 19px; width: 46px; height: 29px; overflow: hidden; }
.halo i { display: block; width: 46px; height: 46px; border-radius: 50%; background: rgba(240, 220, 40, .5); }
.pointer { position: absolute; right: 86px; bottom: 17px; width: 11px; height: 15px; }
```
